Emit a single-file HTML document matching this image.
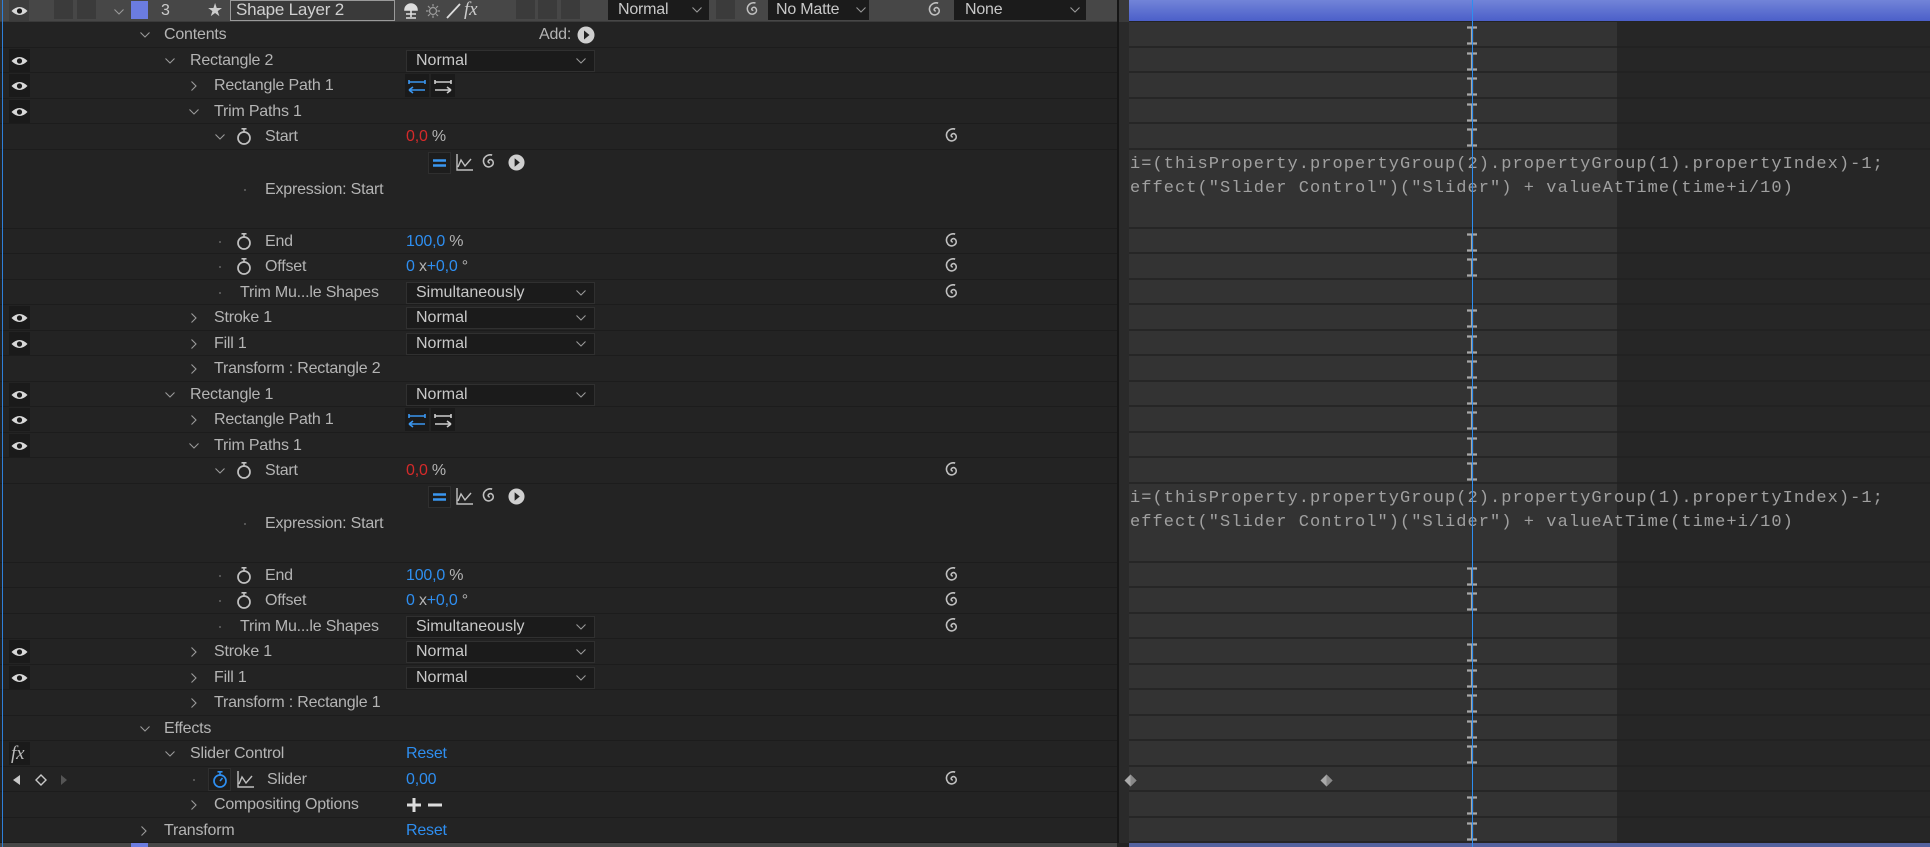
<!DOCTYPE html>
<html><head><meta charset="utf-8"><style>
*{margin:0;padding:0;box-sizing:border-box}
body{width:1930px;height:847px;overflow:hidden;background:#232323;font-family:"Liberation Sans",sans-serif;position:relative}
.row{position:relative;height:25.5px}
.ex{height:79px}
.L{position:absolute;left:0;top:0;width:1117px;height:100%;background:#232323;border-bottom:1px solid #1c1c1c}
.G{position:absolute;left:1117px;width:2px;top:0;height:100%;background:#161616}
.G2{position:absolute;left:1119px;width:10px;top:0;height:100%;background:#2a2a2a}
.T{position:absolute;left:1129px;width:488px;top:0;height:100%;background:#333;border-bottom:2px solid #262626}
.R{position:absolute;left:1617px;right:0;top:0;height:100%;background:#262626;border-bottom:2px solid #222}
.t{position:absolute;top:0;line-height:25px;font-size:16px;color:#b4b4b4;white-space:nowrap;letter-spacing:-0.2px}
.b{color:#2e8ef0}.red{color:#d42a2a}
.a{position:absolute}
.eye{position:absolute;left:9px;top:1px;width:21px;height:23px;background:#1a1a1a}
.eye svg{position:absolute;left:2px;top:7px}
.dd{position:absolute;left:406px;top:2px;width:189px;height:22px;background:#1b1b1b;border:1px solid #303030;color:#c8c8c8;font-size:16px;line-height:20px;padding-left:9px}
.dd svg{position:absolute;right:8px;top:7px}
.ib{position:absolute;left:1466px;top:4px}
.dot{position:absolute;width:2px;height:2px;background:#555;top:12px}
.code{position:absolute;left:1130px;font-family:"Liberation Mono",monospace;font-size:17px;color:#a0a0a0;letter-spacing:1.05px;white-space:nowrap}
</style></head><body>
<svg width="0" height="0" style="position:absolute">
<defs>
<symbol id="eye" viewBox="0 0 17 10"><path d="M0.5 5Q8.5 -3 16.5 5Q8.5 13 0.5 5Z" fill="#d8d8d8"/><circle cx="8.5" cy="5" r="2.6" fill="#1a1a1a"/></symbol>
<symbol id="cd" viewBox="0 0 10 6"><polyline points="0.5,0.5 5,5 9.5,0.5" fill="none" stroke="#9a9a9a" stroke-width="1.1"/></symbol>
<symbol id="cr" viewBox="0 0 6 10"><polyline points="0.5,0.5 5,5 0.5,9.5" fill="none" stroke="#9a9a9a" stroke-width="1.1"/></symbol>
<symbol id="sw" viewBox="0 0 16 18"><circle cx="8" cy="11" r="6" fill="none" stroke="#c0c0c0" stroke-width="1.7"/><path d="M8 5V2.5M5.5 1.8H10.5" stroke="#c0c0c0" stroke-width="1.6"/></symbol>
<symbol id="swb" viewBox="0 0 16 18"><circle cx="8" cy="11" r="6" fill="none" stroke="#2e8ef0" stroke-width="1.7"/><path d="M8 5V2.5M5.5 1.8H10.5M8 11L10.5 8" stroke="#2e8ef0" stroke-width="1.6"/></symbol>
<symbol id="sp" viewBox="0 0 16 16"><path d="M8.3 8.2a1.2 1.2 0 0 1-1.6-1.2a2.4 2.4 0 0 1 3.2-1.6a3.6 3.6 0 0 1 1.2 4.6a4.8 4.8 0 0 1-6.2 1.6a6 6 0 0 1-2.2-7a6.6 6.6 0 0 1 7.8-3.6" fill="none" stroke="#c0c0c0" stroke-width="1.5"/></symbol>
<symbol id="ib" viewBox="0 0 12 19"><path d="M1 1.5H11M1 17.5H11M6 1.5V17.5" stroke="#a8a8a8" stroke-width="2.2" fill="none"/></symbol>
<symbol id="gr" viewBox="0 0 18 17"><path d="M1 0V16H17M2 13L5 6L9 12L15 5" fill="none" stroke="#c0c0c0" stroke-width="1.4"/></symbol>
<symbol id="pl" viewBox="0 0 18 18"><circle cx="9" cy="9" r="8.5" fill="#cfcfcf"/><path d="M7 4.5L12.5 9L7 13.5Z" fill="#222"/></symbol>
</defs></svg>

<!-- header -->
<div class="row" style="height:22px">
<div class="L" style="background:#474747;border-bottom:1px solid #3a3a3a"></div>
<div class="G"></div><div class="G2" style="background:#3a3a3a"></div>
<div class="a" style="left:1129px;top:0;right:0;height:21px;background:linear-gradient(#7284d8,#4b5fc9)"></div>
<div class="a" style="left:9px;top:0;width:20px;height:21px;background:#3d3d3d"></div>
<svg class="a" style="left:11px;top:6px" width="17" height="10"><use href="#eye"/></svg>
<div class="a" style="left:54px;top:0;width:19px;height:19px;background:#3b3b3b"></div>
<div class="a" style="left:77px;top:0;width:19px;height:19px;background:#3b3b3b"></div>
<svg class="a" style="left:114px;top:9px" width="10" height="6"><use href="#cd"/></svg>
<div class="a" style="left:131px;top:1px;width:17px;height:18px;background:#6b7ce0"></div>
<div class="t" style="left:161px;line-height:21px;color:#ccc">3</div>
<div class="t" style="left:207px;line-height:21px;font-size:18px;color:#ccc">★</div>
<div class="a" style="left:230px;top:0;width:165px;height:21px;border:1.5px solid #9a9a9a;background:#3a3a3a"></div>
<div class="t" style="left:236px;line-height:20px;font-size:17px;color:#d0d0d0">Shape Layer 2</div>
<svg class="a" style="left:402px;top:1px" width="86" height="19"><path d="M3 9a6 6 0 0 1 12 0ZM9 9V16M4 13H14M4 17H14" stroke="#ddd" stroke-width="1.6" fill="#ddd"/><circle cx="31" cy="10" r="3.5" fill="none" stroke="#999" stroke-width="1.3"/><path d="M31 3V5.5M31 14.5V17M24 10H26.5M35.5 10H38M26 5L27.8 6.8M34.2 13.2L36 15M36 5L34.2 6.8M27.8 13.2L26 15" stroke="#999" stroke-width="1.2"/><path d="M45 17L58 3" stroke="#ddd" stroke-width="1.8"/></svg>
<div class="t" style="left:464px;line-height:20px;font-family:'Liberation Serif',serif;font-style:italic;font-size:19px;color:#ccc">fx</div>
<div class="a" style="left:516px;top:0;width:19px;height:19px;background:#3b3b3b"></div>
<div class="a" style="left:538px;top:0;width:19px;height:19px;background:#3b3b3b"></div>
<div class="a" style="left:561px;top:0;width:19px;height:19px;background:#3b3b3b"></div>
<div class="a" style="left:608px;top:0;width:101px;height:20px;background:#1b1b1b"></div>
<div class="t" style="left:618px;line-height:20px;color:#c8c8c8">Normal</div>
<svg class="a" style="left:692px;top:7px" width="10" height="6"><use href="#cd"/></svg>
<div class="a" style="left:716px;top:0;width:19px;height:19px;background:#3b3b3b"></div>
<svg class="a" style="left:745px;top:2px" width="16" height="16"><use href="#sp"/></svg>
<div class="a" style="left:768px;top:0;width:101px;height:20px;background:#1b1b1b"></div>
<div class="t" style="left:776px;line-height:20px;color:#c8c8c8">No Matte</div>
<svg class="a" style="left:856px;top:7px" width="10" height="6"><use href="#cd"/></svg>
<svg class="a" style="left:927px;top:2px" width="17" height="17"><use href="#sp"/></svg>
<div class="a" style="left:954px;top:0;width:132px;height:20px;background:#1b1b1b"></div>
<div class="t" style="left:965px;line-height:20px;color:#c8c8c8">None</div>
<svg class="a" style="left:1070px;top:7px" width="10" height="6"><use href="#cd"/></svg>
</div>

<!-- Contents -->
<div class="row"><div class="L"></div><div class="G"></div><div class="G2"></div><div class="T"></div><div class="R"></div>
<svg class="a" style="left:140px;top:10px" width="10" height="6"><use href="#cd"/></svg><div class="t" style="left:164px">Contents</div>
<div class="t" style="left:539px">Add:</div><svg class="a" style="left:577px;top:4px" width="18" height="18"><use href="#pl"/></svg>
<svg class="ib" width="12" height="19"><use href="#ib"/></svg></div>

<!-- Rectangle 2 -->
<div class="row"><div class="L"></div><div class="G"></div><div class="G2"></div><div class="T"></div><div class="R"></div>
<div class="eye"><svg width="17" height="10"><use href="#eye"/></svg></div>
<svg class="a" style="left:165px;top:10px" width="10" height="6"><use href="#cd"/></svg><div class="t" style="left:190px">Rectangle 2</div>
<div class="dd">Normal<svg width="10" height="6"><use href="#cd"/></svg></div>
<svg class="ib" width="12" height="19"><use href="#ib"/></svg></div>

<!-- Rect Path 1 -->
<div class="row"><div class="L"></div><div class="G"></div><div class="G2"></div><div class="T"></div><div class="R"></div>
<div class="eye"><svg width="17" height="10"><use href="#eye"/></svg></div>
<svg class="a" style="left:191px;top:8px" width="6" height="10"><use href="#cr"/></svg><div class="t" style="left:214px">Rectangle Path 1</div>
<div class="a" style="left:405px;top:1px;width:24px;height:23px;background:#1a1a1a"><svg width="24" height="23"><path d="M4 8H20M4 6V10M20 6V10M4 16H20M4 16L8 13M4 16L8 19" stroke="#3a96f0" stroke-width="1.6" fill="none"/></svg></div>
<div class="a" style="left:431px;top:1px;width:24px;height:23px;background:#1a1a1a"><svg width="24" height="23"><path d="M4 8H20M4 6V10M20 6V10M4 16H20M20 16L16 13M20 16L16 19" stroke="#ccc" stroke-width="1.6" fill="none"/></svg></div>
<svg class="ib" width="12" height="19"><use href="#ib"/></svg></div>

<!-- Trim Paths 1 -->
<div class="row"><div class="L"></div><div class="G"></div><div class="G2"></div><div class="T"></div><div class="R"></div>
<div class="eye"><svg width="17" height="10"><use href="#eye"/></svg></div>
<svg class="a" style="left:189px;top:10px" width="10" height="6"><use href="#cd"/></svg><div class="t" style="left:214px">Trim Paths 1</div>
<svg class="ib" width="12" height="19"><use href="#ib"/></svg></div>

<!-- Start -->
<div class="row"><div class="L"></div><div class="G"></div><div class="G2"></div><div class="T"></div><div class="R"></div>
<svg class="a" style="left:215px;top:10px" width="10" height="6"><use href="#cd"/></svg>
<svg class="a" style="left:236px;top:3px" width="16" height="18"><use href="#sw"/></svg><div class="t" style="left:265px">Start</div>
<div class="t" style="left:406px"><span class="red">0,0</span> %</div>
<svg class="a" style="left:944px;top:4px" width="17" height="17"><use href="#sp"/></svg>
<svg class="ib" width="12" height="19"><use href="#ib"/></svg></div>

<!-- Expression -->
<div class="row ex"><div class="L"></div><div class="G"></div><div class="G2"></div><div class="T"></div><div class="R"></div>
<div class="a" style="left:428px;top:2px;width:23px;height:22px;background:#1d1d1d;border:1px solid #2f2f2f"><svg width="21" height="20"><path d="M4 7.5H17M4 12.5H17" stroke="#3a96f0" stroke-width="2.6"/></svg></div>
<svg class="a" style="left:456px;top:4px" width="18" height="17"><use href="#gr"/></svg>
<svg class="a" style="left:481px;top:4px" width="17" height="17"><use href="#sp"/></svg>
<svg class="a" style="left:508px;top:4px" width="17" height="17"><use href="#pl"/></svg>
<div class="dot" style="left:244px;top:39px"></div>
<div class="t" style="left:265px;top:27px">Expression: Start</div>
<div class="code" style="top:5px">i=(thisProperty.propertyGroup(2).propertyGroup(1).propertyIndex)-1;</div>
<div class="code" style="top:29px">effect("Slider Control")("Slider") + valueAtTime(time+i/10)</div>
</div>

<!-- End -->
<div class="row"><div class="L"></div><div class="G"></div><div class="G2"></div><div class="T"></div><div class="R"></div>
<div class="dot" style="left:219px"></div>
<svg class="a" style="left:236px;top:3px" width="16" height="18"><use href="#sw"/></svg><div class="t" style="left:265px">End</div>
<div class="t" style="left:406px"><span class="b">100,0</span> %</div>
<svg class="a" style="left:944px;top:4px" width="17" height="17"><use href="#sp"/></svg>
<svg class="ib" width="12" height="19"><use href="#ib"/></svg></div>

<!-- Offset -->
<div class="row"><div class="L"></div><div class="G"></div><div class="G2"></div><div class="T"></div><div class="R"></div>
<div class="dot" style="left:219px"></div>
<svg class="a" style="left:236px;top:3px" width="16" height="18"><use href="#sw"/></svg><div class="t" style="left:265px">Offset</div>
<div class="t" style="left:406px"><span class="b">0</span> x<span class="b">+0,0</span> °</div>
<svg class="a" style="left:944px;top:4px" width="17" height="17"><use href="#sp"/></svg>
<svg class="ib" width="12" height="19"><use href="#ib"/></svg></div>

<!-- Trim Mu -->
<div class="row"><div class="L"></div><div class="G"></div><div class="G2"></div><div class="T"></div><div class="R"></div>
<div class="dot" style="left:219px"></div>
<div class="t" style="left:240px">Trim Mu...le Shapes</div>
<div class="dd">Simultaneously<svg width="10" height="6"><use href="#cd"/></svg></div>
<svg class="a" style="left:944px;top:4px" width="17" height="17"><use href="#sp"/></svg></div>

<!-- Stroke 1 -->
<div class="row"><div class="L"></div><div class="G"></div><div class="G2"></div><div class="T"></div><div class="R"></div>
<div class="eye"><svg width="17" height="10"><use href="#eye"/></svg></div>
<svg class="a" style="left:191px;top:8px" width="6" height="10"><use href="#cr"/></svg><div class="t" style="left:214px">Stroke 1</div>
<div class="dd">Normal<svg width="10" height="6"><use href="#cd"/></svg></div>
<svg class="ib" width="12" height="19"><use href="#ib"/></svg></div>

<!-- Fill 1 -->
<div class="row"><div class="L"></div><div class="G"></div><div class="G2"></div><div class="T"></div><div class="R"></div>
<div class="eye"><svg width="17" height="10"><use href="#eye"/></svg></div>
<svg class="a" style="left:191px;top:8px" width="6" height="10"><use href="#cr"/></svg><div class="t" style="left:214px">Fill 1</div>
<div class="dd">Normal<svg width="10" height="6"><use href="#cd"/></svg></div>
<svg class="ib" width="12" height="19"><use href="#ib"/></svg></div>

<!-- Transform Rect 2 -->
<div class="row"><div class="L"></div><div class="G"></div><div class="G2"></div><div class="T"></div><div class="R"></div>
<svg class="a" style="left:191px;top:8px" width="6" height="10"><use href="#cr"/></svg><div class="t" style="left:214px">Transform : Rectangle 2</div>
<svg class="ib" width="12" height="19"><use href="#ib"/></svg></div>

<!-- Rectangle 1 -->
<div class="row"><div class="L"></div><div class="G"></div><div class="G2"></div><div class="T"></div><div class="R"></div>
<div class="eye"><svg width="17" height="10"><use href="#eye"/></svg></div>
<svg class="a" style="left:165px;top:10px" width="10" height="6"><use href="#cd"/></svg><div class="t" style="left:190px">Rectangle 1</div>
<div class="dd">Normal<svg width="10" height="6"><use href="#cd"/></svg></div>
<svg class="ib" width="12" height="19"><use href="#ib"/></svg></div>

<!-- Rect Path 1 -->
<div class="row"><div class="L"></div><div class="G"></div><div class="G2"></div><div class="T"></div><div class="R"></div>
<div class="eye"><svg width="17" height="10"><use href="#eye"/></svg></div>
<svg class="a" style="left:191px;top:8px" width="6" height="10"><use href="#cr"/></svg><div class="t" style="left:214px">Rectangle Path 1</div>
<div class="a" style="left:405px;top:1px;width:24px;height:23px;background:#1a1a1a"><svg width="24" height="23"><path d="M4 8H20M4 6V10M20 6V10M4 16H20M4 16L8 13M4 16L8 19" stroke="#3a96f0" stroke-width="1.6" fill="none"/></svg></div>
<div class="a" style="left:431px;top:1px;width:24px;height:23px;background:#1a1a1a"><svg width="24" height="23"><path d="M4 8H20M4 6V10M20 6V10M4 16H20M20 16L16 13M20 16L16 19" stroke="#ccc" stroke-width="1.6" fill="none"/></svg></div>
<svg class="ib" width="12" height="19"><use href="#ib"/></svg></div>

<!-- Trim Paths 1 -->
<div class="row"><div class="L"></div><div class="G"></div><div class="G2"></div><div class="T"></div><div class="R"></div>
<div class="eye"><svg width="17" height="10"><use href="#eye"/></svg></div>
<svg class="a" style="left:189px;top:10px" width="10" height="6"><use href="#cd"/></svg><div class="t" style="left:214px">Trim Paths 1</div>
<svg class="ib" width="12" height="19"><use href="#ib"/></svg></div>

<!-- Start -->
<div class="row"><div class="L"></div><div class="G"></div><div class="G2"></div><div class="T"></div><div class="R"></div>
<svg class="a" style="left:215px;top:10px" width="10" height="6"><use href="#cd"/></svg>
<svg class="a" style="left:236px;top:3px" width="16" height="18"><use href="#sw"/></svg><div class="t" style="left:265px">Start</div>
<div class="t" style="left:406px"><span class="red">0,0</span> %</div>
<svg class="a" style="left:944px;top:4px" width="17" height="17"><use href="#sp"/></svg>
<svg class="ib" width="12" height="19"><use href="#ib"/></svg></div>

<!-- Expression -->
<div class="row ex"><div class="L"></div><div class="G"></div><div class="G2"></div><div class="T"></div><div class="R"></div>
<div class="a" style="left:428px;top:2px;width:23px;height:22px;background:#1d1d1d;border:1px solid #2f2f2f"><svg width="21" height="20"><path d="M4 7.5H17M4 12.5H17" stroke="#3a96f0" stroke-width="2.6"/></svg></div>
<svg class="a" style="left:456px;top:4px" width="18" height="17"><use href="#gr"/></svg>
<svg class="a" style="left:481px;top:4px" width="17" height="17"><use href="#sp"/></svg>
<svg class="a" style="left:508px;top:4px" width="17" height="17"><use href="#pl"/></svg>
<div class="dot" style="left:244px;top:39px"></div>
<div class="t" style="left:265px;top:27px">Expression: Start</div>
<div class="code" style="top:5px">i=(thisProperty.propertyGroup(2).propertyGroup(1).propertyIndex)-1;</div>
<div class="code" style="top:29px">effect("Slider Control")("Slider") + valueAtTime(time+i/10)</div>
</div>

<!-- End -->
<div class="row"><div class="L"></div><div class="G"></div><div class="G2"></div><div class="T"></div><div class="R"></div>
<div class="dot" style="left:219px"></div>
<svg class="a" style="left:236px;top:3px" width="16" height="18"><use href="#sw"/></svg><div class="t" style="left:265px">End</div>
<div class="t" style="left:406px"><span class="b">100,0</span> %</div>
<svg class="a" style="left:944px;top:4px" width="17" height="17"><use href="#sp"/></svg>
<svg class="ib" width="12" height="19"><use href="#ib"/></svg></div>

<!-- Offset -->
<div class="row"><div class="L"></div><div class="G"></div><div class="G2"></div><div class="T"></div><div class="R"></div>
<div class="dot" style="left:219px"></div>
<svg class="a" style="left:236px;top:3px" width="16" height="18"><use href="#sw"/></svg><div class="t" style="left:265px">Offset</div>
<div class="t" style="left:406px"><span class="b">0</span> x<span class="b">+0,0</span> °</div>
<svg class="a" style="left:944px;top:4px" width="17" height="17"><use href="#sp"/></svg>
<svg class="ib" width="12" height="19"><use href="#ib"/></svg></div>

<!-- Trim Mu -->
<div class="row"><div class="L"></div><div class="G"></div><div class="G2"></div><div class="T"></div><div class="R"></div>
<div class="dot" style="left:219px"></div>
<div class="t" style="left:240px">Trim Mu...le Shapes</div>
<div class="dd">Simultaneously<svg width="10" height="6"><use href="#cd"/></svg></div>
<svg class="a" style="left:944px;top:4px" width="17" height="17"><use href="#sp"/></svg></div>

<!-- Stroke 1 -->
<div class="row"><div class="L"></div><div class="G"></div><div class="G2"></div><div class="T"></div><div class="R"></div>
<div class="eye"><svg width="17" height="10"><use href="#eye"/></svg></div>
<svg class="a" style="left:191px;top:8px" width="6" height="10"><use href="#cr"/></svg><div class="t" style="left:214px">Stroke 1</div>
<div class="dd">Normal<svg width="10" height="6"><use href="#cd"/></svg></div>
<svg class="ib" width="12" height="19"><use href="#ib"/></svg></div>

<!-- Fill 1 -->
<div class="row"><div class="L"></div><div class="G"></div><div class="G2"></div><div class="T"></div><div class="R"></div>
<div class="eye"><svg width="17" height="10"><use href="#eye"/></svg></div>
<svg class="a" style="left:191px;top:8px" width="6" height="10"><use href="#cr"/></svg><div class="t" style="left:214px">Fill 1</div>
<div class="dd">Normal<svg width="10" height="6"><use href="#cd"/></svg></div>
<svg class="ib" width="12" height="19"><use href="#ib"/></svg></div>

<!-- Transform Rect 1 -->
<div class="row"><div class="L"></div><div class="G"></div><div class="G2"></div><div class="T"></div><div class="R"></div>
<svg class="a" style="left:191px;top:8px" width="6" height="10"><use href="#cr"/></svg><div class="t" style="left:214px">Transform : Rectangle 1</div>
<svg class="ib" width="12" height="19"><use href="#ib"/></svg></div>

<!-- Effects -->
<div class="row"><div class="L"></div><div class="G"></div><div class="G2"></div><div class="T"></div><div class="R"></div>
<svg class="a" style="left:140px;top:10px" width="10" height="6"><use href="#cd"/></svg><div class="t" style="left:164px">Effects</div>
<svg class="ib" width="12" height="19"><use href="#ib"/></svg></div>

<!-- Slider Control -->
<div class="row"><div class="L"></div><div class="G"></div><div class="G2"></div><div class="T"></div><div class="R"></div>
<div class="a" style="left:9px;top:1px;width:21px;height:23px;background:#1a1a1a"></div>
<div class="t" style="left:11px;font-family:'Liberation Serif',serif;font-style:italic;font-size:19px;color:#bbb">fx</div>
<svg class="a" style="left:165px;top:10px" width="10" height="6"><use href="#cd"/></svg><div class="t" style="left:190px">Slider Control</div>
<div class="t b" style="left:406px">Reset</div>
<svg class="ib" width="12" height="19"><use href="#ib"/></svg></div>

<!-- Slider -->
<div class="row"><div class="L"></div><div class="G"></div><div class="G2"></div><div class="T"></div><div class="R"></div>
<svg class="a" style="left:12px;top:7px" width="10" height="12"><path d="M1 6L8 1V11Z" fill="#c8c8c8"/></svg>
<svg class="a" style="left:35px;top:7px" width="12" height="12"><path d="M6 1L11 6L6 11L1 6Z" fill="none" stroke="#c8c8c8" stroke-width="1.4"/></svg>
<svg class="a" style="left:60px;top:7px" width="8" height="12"><path d="M1 1L7 6L1 11Z" fill="#555"/></svg>
<div class="dot" style="left:193px"></div>
<div class="a" style="left:208px;top:1px;width:23px;height:23px;background:#1d1d1d;border:1px solid #2f2f2f"></div>
<svg class="a" style="left:212px;top:3px" width="16" height="18"><use href="#swb"/></svg>
<svg class="a" style="left:237px;top:4px" width="18" height="17"><use href="#gr"/></svg>
<div class="t" style="left:267px">Slider</div>
<div class="t b" style="left:406px">0,00</div>
<svg class="a" style="left:944px;top:4px" width="17" height="17"><use href="#sp"/></svg>
<svg class="a" style="left:1124px;top:7px" width="13" height="13"><path d="M6.5 0.5L12.5 6.5L6.5 12.5L0.5 6.5Z" fill="#aaa"/><path d="M6.5 0.5L12.5 6.5L6.5 12.5Z" fill="#888"/></svg>
<svg class="a" style="left:1320px;top:7px" width="13" height="13"><path d="M6.5 0.5L12.5 6.5L6.5 12.5L0.5 6.5Z" fill="#aaa"/><path d="M6.5 0.5L12.5 6.5L6.5 12.5Z" fill="#888"/></svg>
</div>

<!-- Compositing -->
<div class="row"><div class="L"></div><div class="G"></div><div class="G2"></div><div class="T"></div><div class="R"></div>
<svg class="a" style="left:191px;top:8px" width="6" height="10"><use href="#cr"/></svg><div class="t" style="left:214px">Compositing Options</div>
<svg class="a" style="left:406px;top:5px" width="38" height="16"><path d="M1 8H15M8 1V15M22 8H36" stroke="#ddd" stroke-width="3"/></svg>
<svg class="ib" width="12" height="19"><use href="#ib"/></svg></div>

<!-- Transform -->
<div class="row"><div class="L"></div><div class="G"></div><div class="G2"></div><div class="T"></div><div class="R"></div>
<svg class="a" style="left:141px;top:8px" width="6" height="10"><use href="#cr"/></svg><div class="t" style="left:164px">Transform</div>
<div class="t b" style="left:406px">Reset</div>
<svg class="ib" width="12" height="19"><use href="#ib"/></svg></div>

<!-- bottom strip -->
<div class="a" style="left:0;top:843px;width:1117px;height:4px;background:#474747"></div>
<div class="a" style="left:131px;top:843px;width:17px;height:4px;background:#6b7ce0"></div>
<div class="a" style="left:1129px;top:843px;right:0;height:4px;background:#55639f"></div>

<!-- left blue line & playhead -->
<div class="a" style="left:2px;top:0;width:1px;height:847px;background:#2e7fd8"></div>
<div class="a" style="left:1472px;top:0;width:1px;height:847px;background:#2e8ef0"></div>
</body></html>
